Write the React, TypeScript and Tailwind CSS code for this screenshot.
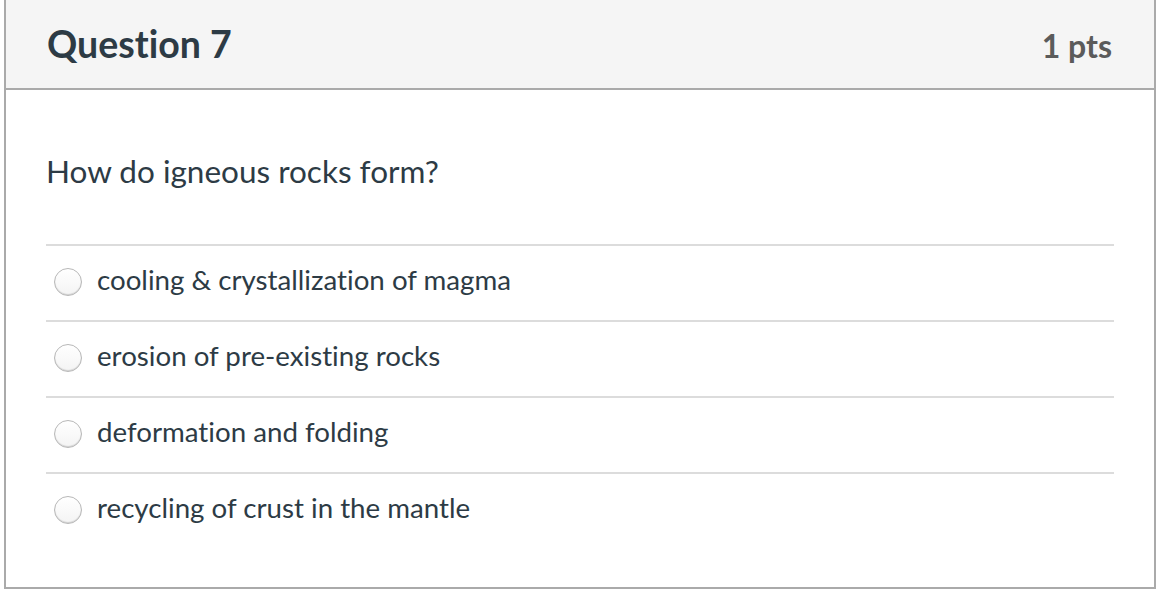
const answers = [
  'cooling & crystallization of magma',
  'erosion of pre-existing rocks',
  'deformation and folding',
  'recycling of crust in the mantle',
];

function Radio() {
  return (
    <span className="block w-[28px] h-[28px] shrink-0 -mt-[3px] rounded-full border border-[#b8b8b8] bg-gradient-to-b from-white to-[#f4f4f4] shadow-[inset_0_-1px_1px_rgba(0,0,0,0.15)]" />
  );
}

export default function App() {
  return (
    <div className="w-[1164px] h-[596px] bg-white font-['Lato','Noto_Sans',sans-serif] text-[#2d3b45] [font-variant-ligatures:none]">
      <div className="ml-[4px] w-[1152px] h-[589px] border-x-2 border-b-2 border-[#aaaaaa] flex flex-col">
        <div className="h-[90px] shrink-0 bg-[#f5f5f5] border-b-2 border-[#aaaaaa] flex items-baseline justify-between pl-[41px] pr-[42px] pt-[20px]">
          <h2 className="text-[37.5px] font-bold leading-[48px]">Question 7</h2>
          <span className="text-[32px] font-bold leading-[48px] text-[#5b5b5b]">1 pts</span>
        </div>
        <div className="px-[40px] pt-[59px]">
          <p className="text-[31.5px] leading-[45px]">How do igneous rocks form?</p>
          <div className="mt-[50px]">
            {answers.map((a) => (
              <label
                key={a}
                className="h-[76px] border-t-2 border-[#dcdcdc] flex items-center gap-[15px] pl-[8px]"
              >
                <Radio />
                <span className="text-[27.7px] leading-[36px] mb-[6px]">{a}</span>
              </label>
            ))}
          </div>
        </div>
      </div>
    </div>
  );
}
